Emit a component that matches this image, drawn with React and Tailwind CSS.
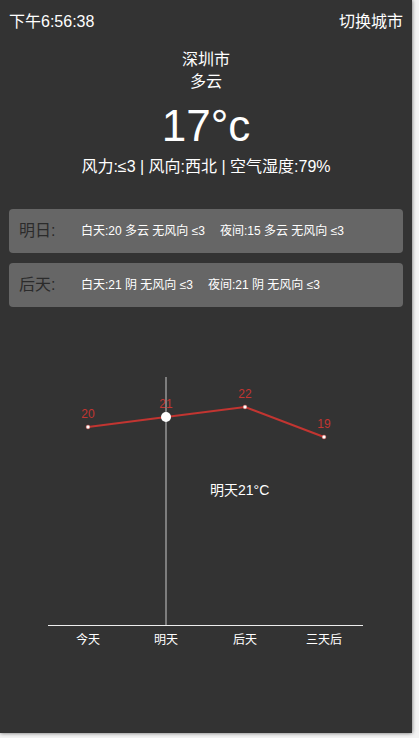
const font = { fontFamily: '"Liberation Sans", "Noto Sans CJK SC", sans-serif' };

const forecast = [
  { label: "明日:", day: "白天:20 多云 无风向 ≤3", night: "夜间:15 多云 无风向 ≤3" },
  { label: "后天:", day: "白天:21 阴 无风向 ≤3", night: "夜间:21 阴 无风向 ≤3" },
];

// chart points, svg coordinates (svg top sits at page y 317)
const points = [
  { name: "今天", v: 20, x: 88, y: 110 },
  { name: "明天", v: 21, x: 166, y: 100 },
  { name: "后天", v: 22, x: 245, y: 90 },
  { name: "三天后", v: 19, x: 324, y: 120 },
];

const TempChart = () => (
  <svg width="412" height="350" viewBox="0 0 412 350" className="block">
    <line x1="166" y1="60" x2="166" y2="308" stroke="#c8c8c8" strokeWidth="1" />
    <polyline
      points={points.map((p) => `${p.x},${p.y}`).join(" ")}
      fill="none"
      stroke="#c23531"
      strokeWidth="2"
    />
    {points.map((p, i) =>
      i === 1 ? (
        <circle key={p.name} cx={p.x} cy={p.y} r="5" fill="#fff" />
      ) : (
        <circle key={p.name} cx={p.x} cy={p.y} r="2" fill="#fff" stroke="#c23531" strokeWidth="0.5" />
      )
    )}
    {points.map((p) => (
      <text
        key={p.name + "v"}
        x={p.x}
        y={p.y - 9}
        textAnchor="middle"
        fontSize="12"
        fill="#c23531"
        style={font}
      >
        {p.v}
      </text>
    ))}
    <line x1="48" y1="308.5" x2="363" y2="308.5" stroke="#eeeeee" strokeWidth="1" />
    {points.map((p) => (
      <text
        key={p.name + "l"}
        x={p.x}
        y={327}
        textAnchor="middle"
        fontSize="12"
        fill="#ffffff"
        style={font}
      >
        {p.name}
      </text>
    ))}
    <text x="210" y="178" fontSize="14" fill="#ffffff" style={font}>
      明天21°C
    </text>
  </svg>
);

export default function App() {
  return (
    <div className="w-full h-[738px] bg-[#f4f4f4] overflow-hidden" style={font}>
      <div className="w-[412px] h-[733px] bg-[#333333] shadow-[0_0_4px_rgba(0,0,0,0.6)] text-white">
        <div className="flex justify-between px-[9px] pt-[11px] text-[16px] leading-[22px]">
          <span>下午6:56:38</span>
          <span>切换城市</span>
        </div>
        <div className="flex flex-col items-center mt-[16px]">
          <div className="text-[16px] leading-[22px]">深圳市</div>
          <div className="text-[16px] leading-[22px]">多云</div>
          <div className="text-[44px] leading-[52px] mt-[7px]">17°c</div>
          <div className="text-[16px] leading-[22px] mt-[4px]">风力:≤3 | 风向:西北 | 空气湿度:79%</div>
        </div>
        <div className="flex flex-col gap-[10px] px-[9px] mt-[31px]">
          {forecast.map((f) => (
            <div key={f.label} className="flex items-center h-[44px] rounded-[4px] bg-[#666666] pl-[10px]">
              <span className="w-[62px] text-[16px] text-[#2b2b2b]">{f.label}</span>
              <span className="text-[12px]">{f.day}</span>
              <span className="text-[12px] ml-[15px]">{f.night}</span>
            </div>
          ))}
        </div>
        <div className="mt-[10px]">
          <TempChart />
        </div>
      </div>
    </div>
  );
}
